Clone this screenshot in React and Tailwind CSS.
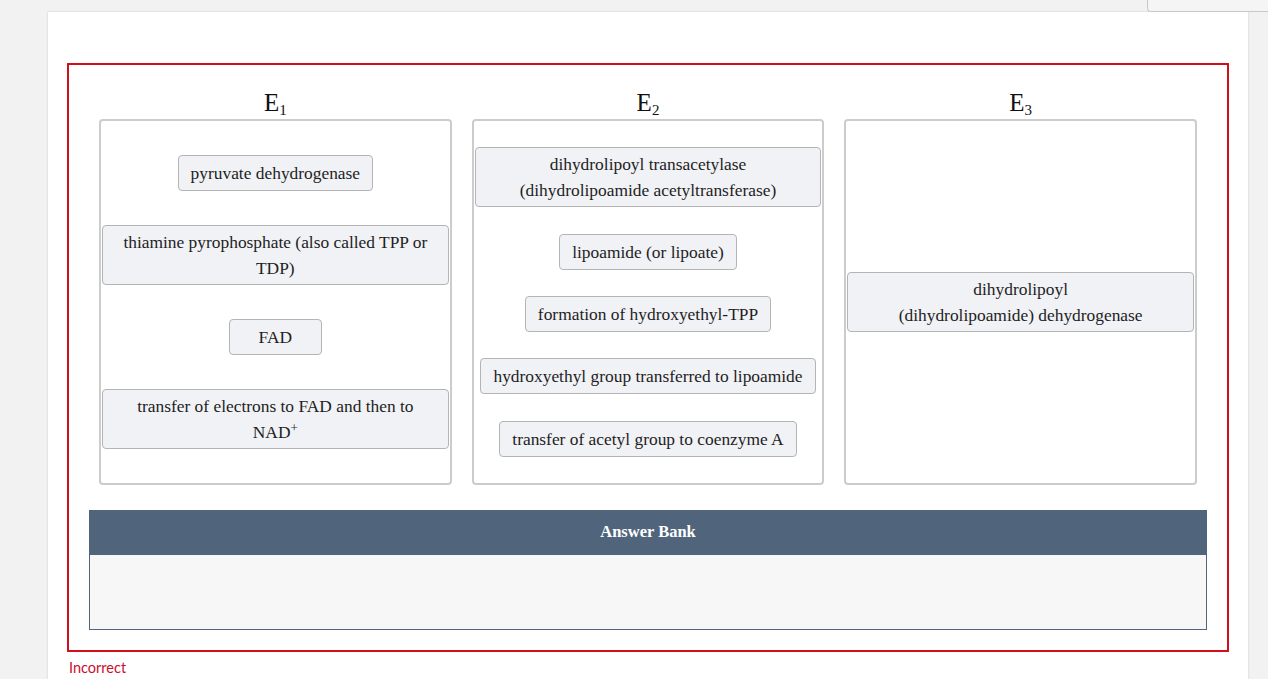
const columns = [
  {
    label: "1",
    items: [
      { lines: ["pyruvate dehydrogenase"] },
      { lines: ["thiamine pyrophosphate (also called TPP or TDP)"] },
      { lines: ["FAD"] },
      { lines: ["transfer of electrons to FAD and then to"], sup: "NAD" },
    ],
  },
  {
    label: "2",
    items: [
      { lines: ["dihydrolipoyl transacetylase", "(dihydrolipoamide acetyltransferase)"], wide: true },
      { lines: ["lipoamide (or lipoate)"] },
      { lines: ["formation of hydroxyethyl-TPP"] },
      { lines: ["hydroxyethyl group transferred to lipoamide"] },
      { lines: ["transfer of acetyl group to coenzyme A"] },
    ],
  },
  {
    label: "3",
    items: [{ lines: ["dihydrolipoyl", "(dihydrolipoamide) dehydrogenase"], wide: true }],
  },
];

function Chip({ item }) {
  return (
    <div
      className={
        "mx-px flex min-h-[36px] min-w-[93px] max-w-[calc(100%-2px)] items-center justify-center rounded-[4px] border border-[#b4b4b4] bg-[#f1f2f6] px-3 py-[3px] text-center text-[17.4px] leading-[26px] text-[#1e1e1e] " +
        (item.wide ? "w-[calc(100%-2px)]" : "")
      }
    >
      <div>
        {item.lines.map((line, i) => (
          <span key={line}>
            {i > 0 && <br />}
            {line}
          </span>
        ))}
        {item.sup && (
          <>
            {" "}
            {item.sup}
            <sup className="text-[13px] text-[#1e1e1e]">+</sup>
          </>
        )}
      </div>
    </div>
  );
}

function Column({ col }) {
  return (
    <div className="flex flex-col">
      <div className="flex h-[54px] items-end justify-center pb-[4px]">
        <span className="text-[25px] leading-none text-[#111]">
          E<sub className="text-[15px]">{col.label}</sub>
        </span>
      </div>
      <div className="flex h-[366px] flex-col items-center justify-evenly rounded-[4px] border-2 border-[#cccccc] bg-white">
        {col.items.map((item) => (
          <Chip key={item.lines[0]} item={item} />
        ))}
      </div>
    </div>
  );
}

export default function App() {
  return (
    <div className="min-h-[679px] bg-[#f2f2f2] font-['Liberation_Serif',serif]">
      <div className="flex h-[12px] justify-end">
        <div className="h-[12px] w-[121px] rounded-bl-[4px] border-b border-l border-[#c8c8c8] bg-[#f5f5f5]" />
      </div>
      <div className="ml-[48px] min-h-[667px] w-[1200px] bg-white px-[19px] pt-[51px] shadow-[0_0_2px_rgba(0,0,0,0.18)]">
        <div className="border-2 border-[#d0111c] px-[20px] pb-[20px]">
          <div className="grid grid-cols-3 gap-5 px-[10px]">
            {columns.map((col) => (
              <Column key={col.label} col={col} />
            ))}
          </div>
          <div className="mt-[25px]">
            <div className="flex h-[45px] items-center justify-center bg-[#50657c] text-[16.5px] font-bold text-white">
              Answer Bank
            </div>
            <div className="h-[75px] border-x border-b border-[#50657c] bg-[#f7f7f7]" />
          </div>
        </div>
        <div className="pt-[6px] pl-[2px] font-['Lato',sans-serif] text-[14.5px] leading-5 text-[#c8102e]">
          Incorrect
        </div>
      </div>
    </div>
  );
}
